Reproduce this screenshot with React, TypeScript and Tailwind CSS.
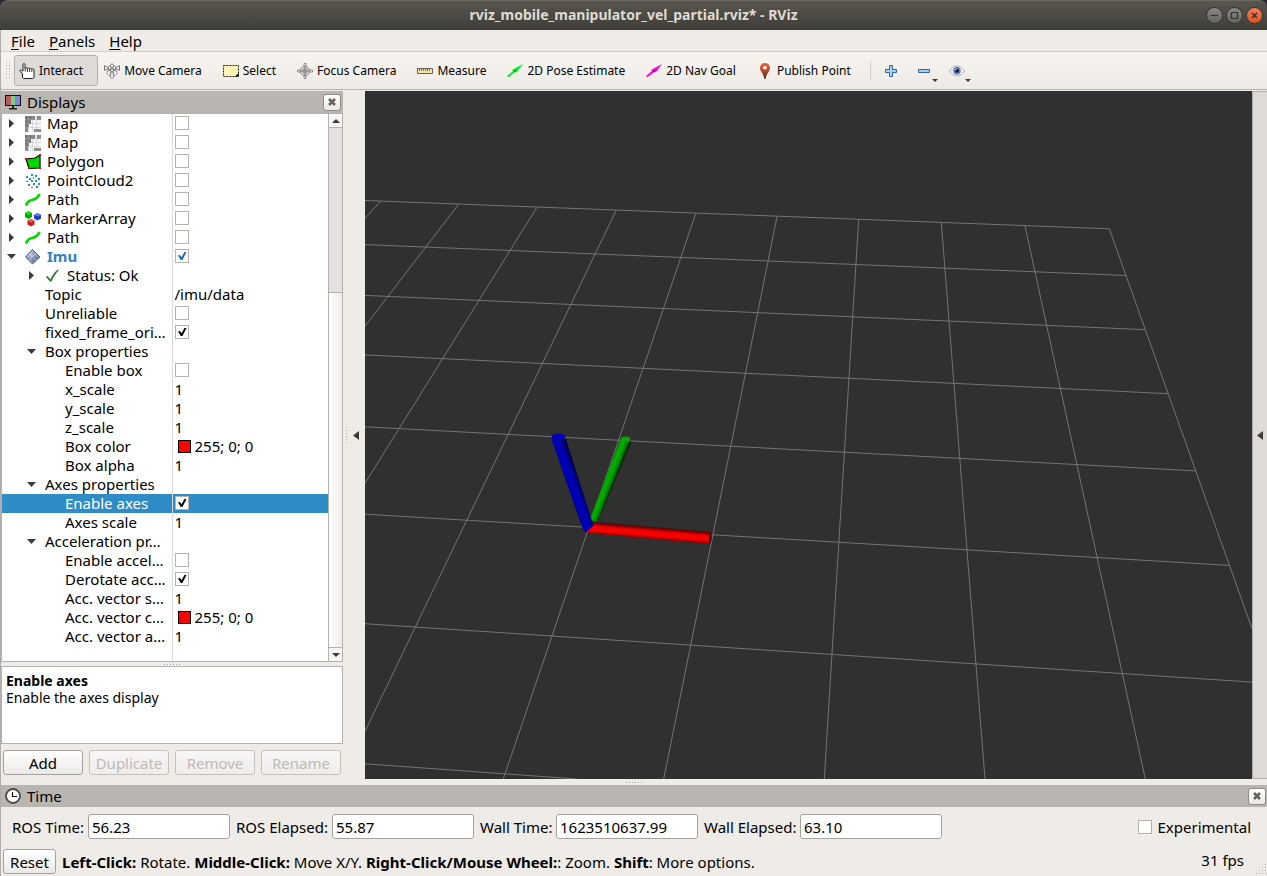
import { useState } from 'react';
import type { ReactNode } from 'react';

interface TreeRow {
  name: string;
  level: number;
  arrow?: 'open' | 'closed';
  icon?: ReactNode;
  checked?: boolean;
  value?: string;
  color?: boolean;
  active?: boolean;
  selected?: boolean;
}

// Display type icons
const MapIcon = () => (
  <svg className="h-4 w-4 shrink-0" viewBox="0 0 16 16" shapeRendering="crispEdges">
    <rect width="16" height="16" fill="#f6f6f6" />
    <path d="M3.500 0v16M7.500 0v16M11.500 0v16M0 3.500h16M0 7.500h16M0 11.500h16" stroke="#d8d8d8" />
    <path d="M0 0h10v4H6v4H4v3H0z" fill="#7a7a7a" />
    <path d="M0 11h3v5H0zM12 0h4v4h-4zM9 13h7v3H9z" fill="#8c8c8c" />
    <path d="M3.500 0v10M7.500 0v4M0 3.500h10M0 7.500h5M0 11.500h3" stroke="#a4a4a4" strokeOpacity=".6" />
  </svg>
);

const PolygonIcon = () => (
  <svg className="h-4 w-4 shrink-0" viewBox="0 0 16 16">
    <path d="M1 5l9-1 5-3v13l-11 .500z" fill="#00d800" stroke="#000" strokeWidth="1.200" />
    <path d="M0 4h2v2H0zM14 0h2v2h-2zM14 13h2v2h-2zM3 13h2v2H3z" fill="#f00" />
  </svg>
);

const PointCloudIcon = () => (
  <svg className="h-4 w-4 shrink-0" viewBox="0 0 16 16" shapeRendering="crispEdges">
    <path
      d="M1 3h2v2H1zM6 1h2v2H6zM10 2h2v2h-2zM4 5h2v2H4zM8 4h1v2H8zM13 5h2v2h-2zM1 8h2v1H1zM6 7h2v2H6zM10 7h2v2h-2zM3 11h2v2H3zM8 10h2v2H8zM13 10h2v2h-2zM6 14h2v1H6zM11 13h2v2h-2z"
      fill="#1a8cf0"
    />
  </svg>
);

const PathIcon = () => (
  <svg className="h-4 w-4 shrink-0" viewBox="0 0 16 16">
    <path d="M1 13.500c1.500-4 3.500-5 6-5.500S12.500 6.500 14.500 2" fill="none" stroke="#00d800" strokeWidth="2.800" />
  </svg>
);

const MarkerArrayIcon = () => (
  <svg className="h-4 w-4 shrink-0" viewBox="0 0 16 16">
    <path d="M0 2L3.500 .3 7 2v4L3.500 8 0 6z" fill="#00a800" />
    <path d="M0 2L3.500 .3 7 2 3.500 4z" fill="#1be01b" />
    <path d="M9 4l3.500-2L16 4v3.500l-3.500 2-3.500-2z" fill="#1c3ec4" />
    <path d="M9 4l3.500-2L16 4l-3.500 1.500z" fill="#5a78f0" />
    <path d="M2.500 9.500L6 8l3.500 1.500v4L6 15.500l-3.500-2z" fill="#c81e1e" />
    <path d="M2.500 9.500L6 8l3.500 1.500L6 11.500z" fill="#f06060" />
  </svg>
);

const ImuIcon = () => (
  <svg className="h-4 w-4 shrink-0" viewBox="0 0 16 16">
    <path d="M7.500 .5L15 8l-7.500 7L.5 8z" fill="#8d9bc0" stroke="#54638c" />
    <path d="M7.500 1.500v6L1.500 8z" fill="#b4bfda" />
    <path d="M7.500 7.500L14 8l-6.500 6z" fill="#6d7ca6" />
    <path d="M4 11l7-7M4.500 5l6.500 6.500" stroke="#d5dced" strokeWidth=".8" />
  </svg>
);

const StatusOkIcon = () => (
  <svg className="h-4 w-4 shrink-0" viewBox="0 0 16 16">
    <path d="M1 9l1.500-1 3 3.500C7.500 7 9.500 4 13 1.500l.8.5C10.500 5.500 8.500 9 6.500 13.500H5z" fill="#1d7a25" />
  </svg>
);

const rows: TreeRow[] = [
  { name: 'Map', level: 0, arrow: 'closed', icon: <MapIcon />, checked: false },
  { name: 'Map', level: 0, arrow: 'closed', icon: <MapIcon />, checked: false },
  { name: 'Polygon', level: 0, arrow: 'closed', icon: <PolygonIcon />, checked: false },
  { name: 'PointCloud2', level: 0, arrow: 'closed', icon: <PointCloudIcon />, checked: false },
  { name: 'Path', level: 0, arrow: 'closed', icon: <PathIcon />, checked: false },
  { name: 'MarkerArray', level: 0, arrow: 'closed', icon: <MarkerArrayIcon />, checked: false },
  { name: 'Path', level: 0, arrow: 'closed', icon: <PathIcon />, checked: false },
  { name: 'Imu', level: 0, arrow: 'open', icon: <ImuIcon />, checked: true, active: true },
  { name: 'Status: Ok', level: 1, arrow: 'closed', icon: <StatusOkIcon /> },
  { name: 'Topic', level: 1, value: '/imu/data' },
  { name: 'Unreliable', level: 1, checked: false },
  { name: 'fixed_frame_ori…', level: 1, checked: true },
  { name: 'Box properties', level: 1, arrow: 'open' },
  { name: 'Enable box', level: 2, checked: false },
  { name: 'x_scale', level: 2, value: '1' },
  { name: 'y_scale', level: 2, value: '1' },
  { name: 'z_scale', level: 2, value: '1' },
  { name: 'Box color', level: 2, value: '255; 0; 0', color: true },
  { name: 'Box alpha', level: 2, value: '1' },
  { name: 'Axes properties', level: 1, arrow: 'open' },
  { name: 'Enable axes', level: 2, checked: true, selected: true },
  { name: 'Axes scale', level: 2, value: '1' },
  { name: 'Acceleration pr…', level: 1, arrow: 'open' },
  { name: 'Enable accel…', level: 2, checked: false },
  { name: 'Derotate acc…', level: 2, checked: true },
  { name: 'Acc. vector s…', level: 2, value: '1' },
  { name: 'Acc. vector c…', level: 2, value: '255; 0; 0', color: true },
  { name: 'Acc. vector a…', level: 2, value: '1' },
];

const indents = ['pl-0', 'pl-5', 'pl-10'];

const Checkbox = ({ id, label, initial = false, blue = false }: { id?: string; label?: string; initial?: boolean; blue?: boolean }) => {
  const [on, setOn] = useState(initial);
  return (
    <span className="relative block h-[14px] w-[14px] shrink-0">
      <input
        id={id}
        type="checkbox"
        aria-label={label}
        checked={on}
        onChange={() => setOn(!on)}
        className="block h-[14px] w-[14px] appearance-none border border-[#b6b2ae] bg-white"
      />
      {on && (
        <svg className="pointer-events-none absolute inset-0 h-[14px] w-[14px]" viewBox="0 0 14 14">
          <path d="M3 6.500l2-.4 1.500 2.200L9.500 3h2L7.400 11H5.800z" fill={blue ? '#1f64ad' : '#000'} />
        </svg>
      )}
    </span>
  );
};

const CloseButton = ({ label }: { label: string }) => (
  <button
    aria-label={label}
    className="flex h-[17px] w-[18px] items-center justify-center rounded-[3px] border border-[#8f8b87] bg-gradient-to-b from-white to-[#ebe9e7]"
  >
    <svg className="h-2 w-2" viewBox="0 0 8 8">
      <path d="M1 1l6 6M7 1L1 7" stroke="#66635f" strokeWidth="2.600" />
    </svg>
  </button>
);

const Arrow = ({ dir }: { dir: 'open' | 'closed' }) => (
  <svg className="h-[9px] w-[9px]" viewBox="0 0 9 9">
    <path d={dir === 'open' ? 'M0 2h9L4.500 7z' : 'M2 0v9l5-4.500z'} fill="#3c3b37" />
  </svg>
);

// Toolbar icons
const HandIcon = () => (
  <svg className="h-4 w-4 shrink-0" viewBox="0 0 16 16">
    <path
      d="M3.500 10.500L1 8.500c-.8-1 .3-2 1.300-1.300l1.700 1V1.500c0-1.200 2-1.200 2 0v4c0-1 2.200-1 2.200.2 0-1 2.300-1 2.300.2 0-.9 2.200-.8 2.200.4.2-.7 2.300-.6 2.300.6V14c0 1-.5 1.500-1.500 1.500H5c-1 0-1.500-.6-1.500-1.500z"
      fill="#fff"
      stroke="#222"
    />
    <path d="M6.200 5.500v3M8.400 6v3M10.600 6v3M12.800 6.500V9" stroke="#222" strokeWidth=".9" />
  </svg>
);

const MoveIcon = () => (
  <svg className="h-4 w-4 shrink-0" viewBox="0 0 16 16" fill="#f4f2ef" stroke="#6b6b6b" strokeWidth=".9">
    <path d="M2.500 5.500C4 8.500 12 8.500 13.500 5.500M3 9c1.500-4 8.500-4 10 0" fill="none" />
    <path d="M8 .5l2.500 2.700H9V6H7V3.200H5.500zM8 15.500l3-3.200H9.300V9H6.700v3.300H5z" />
    <path d="M.5 7.500v-5l1.300 1.200L4.500 4v2l-2 .2zM15.500 7.500v-5l-1.300 1.200-2.700.3v2l2 .2z" />
    <circle cx="8" cy="7.200" r="1.600" />
    <path d="M3 9.500l.3 2M13 9.500l-.3 2" />
  </svg>
);

const SelectIcon = () => (
  <svg className="h-4 w-4 shrink-0" viewBox="0 0 16 16">
    <path d="M.5 2.500h15v11H.5z" fill="#fff4b4" stroke="#222" strokeDasharray="2 1" />
    <path d="M15.500 10v3.500H12z" fill="#000" />
  </svg>
);

const FocusIcon = () => (
  <svg className="h-4 w-4 shrink-0" viewBox="0 0 16 16" fill="none" stroke="#777">
    <circle cx="8" cy="8" r="4.600" fill="#e8e6e3" />
    <circle cx="8" cy="8" r="2.300" />
    <path d="M8 3v10M3 8h10" />
    <path d="M7 .5h2v2.800H7zM7 12.700h2v2.800H7zM.5 7h2.800v2H.5zM12.700 7h2.800v2h-2.800z" fill="#f4f2ef" strokeWidth=".8" />
  </svg>
);

const RulerIcon = () => (
  <svg className="h-4 w-4 shrink-0" viewBox="0 0 16 16">
    <path d="M.5 5.500h15v5H.5z" fill="#f2e4a8" stroke="#65625c" />
    <path d="M2.500 6v2M4.500 6v2M6.500 6v2M8.500 6v2M10.500 6v2M12.500 6v2" stroke="#77736a" />
  </svg>
);

const PoseArrow = ({ fill, dark }: { fill: string; dark: string }) => (
  <svg className="h-4 w-4 shrink-0" viewBox="0 0 16 16">
    <path d="M0 13l6-5-1-1L16 1 9.500 9.500 8.300 9 1.200 14.300z" fill={fill} />
    <path d="M6.500 8l2.500-1.300-.8 2.300z" fill={dark} />
  </svg>
);

const PinIcon = () => (
  <svg className="h-4 w-4 shrink-0" viewBox="0 0 16 16">
    <defs>
      <linearGradient id="pin" x1="0" y1="0" x2="0" y2="1">
        <stop offset="0" stopColor="#f0603c" />
        <stop offset=".5" stopColor="#b04a2c" />
        <stop offset="1" stopColor="#403020" />
      </linearGradient>
    </defs>
    <path d="M8 0C5 0 3 2.200 3 5c0 3.500 4 6 4.300 11h1.400C9 11 13 8.500 13 5c0-2.800-2-5-5-5z" fill="url(#pin)" />
    <circle cx="8" cy="4.700" r="1.800" fill="#fff" />
  </svg>
);

const PlusIcon = () => (
  <svg className="h-3 w-3" viewBox="0 0 12 12">
    <path d="M4.500 .5h3v4h4v3h-4v4h-3v-4h-4v-3h4z" fill="#a9cdee" stroke="#2f66aa" />
  </svg>
);

const MinusIcon = () => (
  <svg className="h-3 w-3" viewBox="0 0 12 12">
    <path d="M.5 4.500h11v3H.5z" fill="#a9cdee" stroke="#2f66aa" />
  </svg>
);

const EyeIcon = () => (
  <svg className="h-4 w-4" viewBox="0 0 16 16">
    <path d="M.5 8C3 4 5.500 3.200 8 3.200S13 4 15.500 8C13 12 10.500 12.800 8 12.800S3 12 .5 8z" fill="#ededed" stroke="#b2afab" />
    <circle cx="8" cy="7.800" r="3.700" fill="#5c74b8" />
    <circle cx="8" cy="7.800" r="1.700" fill="#0c1230" />
    <circle cx="6.800" cy="6.500" r=".8" fill="#d8e0f4" />
  </svg>
);

const tools = [
  { label: 'Interact', icon: <HandIcon />, active: true },
  { label: 'Move Camera', icon: <MoveIcon /> },
  { label: 'Select', icon: <SelectIcon /> },
  { label: 'Focus Camera', icon: <FocusIcon /> },
  { label: 'Measure', icon: <RulerIcon /> },
  { label: '2D Pose Estimate', icon: <PoseArrow fill="#00f028" dark="#0a7a1e" /> },
  { label: '2D Nav Goal', icon: <PoseArrow fill="#fa00e0" dark="#8a0a7c" /> },
  { label: 'Publish Point', icon: <PinIcon /> },
];

const menus = ['File', 'Panels', 'Help'];

// Ground grid, as [x1, y1, x2, y2]
const gridLines = [
  [0, 109.5, 744.3, 137.8],
  [0, 153.6, 761, 184.5],
  [0, 204.4, 780.3, 238.7],
  [0, 263.9, 803.3, 302.7],
  [0, 335.8, 830.7, 379.9],
  [0, 423.2, 864.7, 474.4],
  [0, 532.7, 887, 591.1],
  [0, 672.8, 211.7, 688],
  [15.7, 110.3, 0, 127.2],
  [93.3, 113.7, 0, 235.3],
  [171.7, 116.7, 0, 392.3],
  [251, 119.7, 0, 640.4],
  [330.7, 122.7, 138.3, 688],
  [412, 125.7, 298.7, 688],
  [493.7, 128.4, 459.3, 688],
  [576.3, 131.8, 620, 688],
  [660, 134.8, 780.3, 688],
  [744.3, 137.8, 887, 537.6],
];

const Viewport = () => (
  <svg className="min-w-0 flex-1 bg-[#303030]" viewBox="0 0 887 688" preserveAspectRatio="xMinYMin slice" role="img" aria-label="3D view">
    <defs>
      <linearGradient id="blue" gradientUnits="userSpaceOnUse" x1="202" y1="395" x2="216" y2="390">
        <stop offset="0" stopColor="#000090" />
        <stop offset=".3" stopColor="#0000c0" />
        <stop offset=".65" stopColor="#0000a0" />
        <stop offset="1" stopColor="#000020" />
      </linearGradient>
      <linearGradient id="green" gradientUnits="userSpaceOnUse" x1="239" y1="388" x2="249" y2="392">
        <stop offset="0" stopColor="#009000" />
        <stop offset=".35" stopColor="#00b400" />
        <stop offset=".7" stopColor="#008c00" />
        <stop offset="1" stopColor="#001e00" />
      </linearGradient>
      <linearGradient id="red" gradientUnits="userSpaceOnUse" x1="287" y1="436" x2="286" y2="448">
        <stop offset="0" stopColor="#500000" />
        <stop offset=".35" stopColor="#f00000" />
        <stop offset=".65" stopColor="#ff0000" />
        <stop offset="1" stopColor="#900000" />
      </linearGradient>
    </defs>
    <g stroke="#747474">
      {gridLines.map(([x1, y1, x2, y2], i) => (
        <line key={i} x1={x1} y1={y1} x2={x2} y2={y2} />
      ))}
    </g>
    <path d="M225 428L255 349c1-4 12-2 11 3l-33.500 80z" fill="url(#green)" />
    <ellipse cx="260.500" cy="348.500" rx="4.800" ry="3" fill="#00a800" />
    <path d="M228 431l118 10c1.500 3 1 9-.7 12L222 442z" fill="url(#red)" />
    <path d="M345.500 441.500c1.500 2 1.500 9-.7 11.500-1.500-3-1-9 .7-11.500z" fill="#3a0000" />
    <path d="M186.300 347.500l31.200 90 3.500 4 7.500-7-27.800-87z" fill="url(#blue)" />
    <ellipse cx="193.500" cy="346" rx="7" ry="3.600" fill="#0000b8" />
  </svg>
);

const fields = [
  { id: 'ros-time', label: 'ROS Time:', value: '56.23', width: 'w-[76px]' },
  { id: 'ros-elapsed', label: 'ROS Elapsed:', value: '55.87', width: 'w-[96px]' },
  { id: 'wall-time', label: 'Wall Time:', value: '1623510637.99', width: 'w-[76px]' },
  { id: 'wall-elapsed', label: 'Wall Elapsed:', value: '63.10', width: 'w-[96px]' },
];

const buttonStyle = 'h-[25px] rounded-[3px] border border-[#a5a19d] bg-gradient-to-b from-white to-[#eceae8]';

export default function App() {
  return (
    <div className="flex h-screen flex-col overflow-hidden bg-[#2a2730] font-['Noto_Sans',sans-serif] text-[15px] leading-5 text-black">
      {/* Title bar */}
      <header className="grid h-[30px] shrink-0 grid-cols-[1fr_auto_1fr] items-center rounded-t-lg border-t border-[#6b685f] bg-gradient-to-b from-[#59564e] to-[#3e3d38]">
        <span />
        <h1 className="pb-px text-sm font-bold text-[#dfdbd2]">rviz_mobile_manipulator_vel_partial.rviz* - RViz</h1>
        <div className="flex justify-end gap-[3px] pr-1">
          {['Minimize', 'Maximize', 'Close'].map((name) => (
            <button
              key={name}
              aria-label={name}
              className={
                name === 'Close'
                  ? 'h-[17px] w-[17px] rounded-full border border-[#35342f] bg-gradient-to-b from-[#f47f58] to-[#e2501f]'
                  : 'h-[17px] w-[17px] rounded-full border border-[#35342f] bg-gradient-to-b from-[#8b8983] to-[#65635d]'
              }
            >
              <svg viewBox="0 0 15 15" fill="none" stroke="#33322e" strokeWidth="1.200">
                {name === 'Minimize' && <path d="M4 7.500h7" />}
                {name === 'Maximize' && <path d="M4.500 4.500h6v6h-6z" />}
                {name === 'Close' && <path d="M5 5l5 5M10 5l-5 5" strokeWidth="1.500" />}
              </svg>
            </button>
          ))}
        </div>
      </header>

      <div className="flex min-h-0 flex-1 flex-col border-l border-[#b0adaa] bg-[#efebe7]">
        {/* Menu bar */}
        <nav className="flex h-[22px] shrink-0 items-center gap-[14px] border-b border-[#d3cfcb] pl-[10px]">
          {menus.map((m) => (
            <button key={m}>
              <u className="underline-offset-2">{m[0]}</u>
              {m.slice(1)}
            </button>
          ))}
        </nav>

        {/* Toolbar */}
        <div className="flex h-[38px] shrink-0 items-center border-b border-[#b9b5b1] bg-gradient-to-b from-[#f8f5f1] to-[#eeebe7] text-xs">
          <svg className="mx-1 h-[17px] w-[5px] shrink-0" viewBox="0 0 5 17">
            <path d="M1.500 0v17M4.500 0v17" stroke="#b8b4b0" strokeDasharray="1 2" />
          </svg>
          <div className="flex gap-px">
            {tools.map((t) => (
              <button
                key={t.label}
                className={
                  t.active
                    ? 'flex h-[31px] items-center gap-1 rounded-[3px] border border-[#b4b0ac] bg-[#dedad7] pr-[14px] pl-1 whitespace-nowrap'
                    : 'flex h-[31px] items-center gap-1 border border-transparent pr-[14px] pl-1 whitespace-nowrap'
                }
              >
                {t.icon}
                {t.label}
              </button>
            ))}
          </div>
          <span className="mx-1 h-5 w-px bg-[#d3cfcb]" />
          <button aria-label="Add tool" className="flex h-[31px] w-[33px] items-center justify-center">
            <PlusIcon />
          </button>
          <button aria-label="Remove tool" className="relative flex h-[31px] w-[33px] items-center justify-center">
            <MinusIcon />
            <svg className="absolute right-[3px] bottom-1 h-[3px] w-[6px]" viewBox="0 0 6 3">
              <path d="M0 0h6L3 3z" fill="#3c3b37" />
            </svg>
          </button>
          <button aria-label="Views" className="relative flex h-[31px] w-[33px] items-center justify-center">
            <EyeIcon />
            <svg className="absolute right-[3px] bottom-1 h-[3px] w-[6px]" viewBox="0 0 6 3">
              <path d="M0 0h6L3 3z" fill="#3c3b37" />
            </svg>
          </button>
        </div>

        <main className="flex min-h-0 flex-1 pt-px">
          {/* Displays panel */}
          <aside className="flex w-[342px] shrink-0 flex-col">
            <div className="flex h-[22px] shrink-0 items-center bg-[#b9b5b1] pr-[2px] pl-1">
              <svg className="h-4 w-4" viewBox="0 0 16 16">
                <path d="M0 1h16v11H0z" fill="#111" />
                <path d="M1 2h5v9H1z" fill="#b85c60" />
                <path d="M6 2h4v9H6z" fill="#78d080" />
                <path d="M10 2h5v9h-5z" fill="#8088d8" />
                <path d="M7 12h2v2h3v1.500H4V14h3z" fill="#222" />
              </svg>
              <h2 className="flex-1 pl-[6px]">Displays</h2>
              <CloseButton label="Close Displays" />
            </div>
            <div className="flex min-h-0 flex-1 border border-[#b5b1ad] bg-white">
              <div className="min-w-0 flex-1 overflow-hidden">
                <table className="w-full table-fixed border-collapse">
                  <colgroup>
                    <col className="w-[170px]" />
                    <col />
                  </colgroup>
                  <tbody>
                    {rows.map((r, i) => (
                      <tr key={i} className={r.selected ? 'h-[19px] bg-[#308cc6] text-white' : 'h-[19px]'}>
                        <td className="border-r border-[#dcdad8] p-0">
                          <div className={`flex h-[19px] items-center leading-[19px] whitespace-nowrap ${indents[r.level]}`}>
                            <span className="mr-1 flex w-[19px] shrink-0 justify-center">{r.arrow && <Arrow dir={r.arrow} />}</span>
                            {r.icon}
                            <span className={`${r.icon ? 'pl-[6px]' : ''} ${r.active ? 'font-bold text-[#3080c8]' : ''}`}>{r.name}</span>
                          </div>
                        </td>
                        <td className="p-0 pl-[2px]">
                          <div className="flex h-[19px] items-center pb-px leading-[19px]">
                            {r.checked !== undefined && <Checkbox label={r.name} initial={r.checked} blue={r.active} />}
                            {r.color && <span className="mr-1 ml-[3px] h-[13px] w-[13px] border border-black bg-[#f00]" />}
                            {r.value}
                          </div>
                        </td>
                      </tr>
                    ))}
                  </tbody>
                </table>
                <div className="h-full w-[171px] border-r border-[#dcdad8]" />
              </div>
              {/* Scroll bar */}
              <div className="flex w-[14px] shrink-0 flex-col border-l border-[#b5b1ad] bg-[#e4e2e0]">
                <button aria-label="Scroll up" className="flex h-[14px] items-center justify-center border-b border-[#b5b1ad] bg-[#f8f7f6]">
                  <svg className="h-1 w-2" viewBox="0 0 8 4">
                    <path d="M0 4h8L4 0z" fill="#3c3b37" />
                  </svg>
                </button>
                <div className="flex-[165]" />
                <div className="flex-[355] border-t border-[#b5b1ad] bg-gradient-to-r from-white to-[#efedeb]" />
                <button aria-label="Scroll down" className="flex h-[14px] items-center justify-center border-t border-[#b5b1ad] bg-[#f8f7f6]">
                  <svg className="h-1 w-2" viewBox="0 0 8 4">
                    <path d="M0 0h8L4 4z" fill="#3c3b37" />
                  </svg>
                </button>
              </div>
            </div>
            <div className="flex h-1 shrink-0 items-center justify-center">
              <svg className="h-px w-[17px]" viewBox="0 0 17 1">
                <path d="M0 .5h17" stroke="#aaa6a2" strokeDasharray="1 2" />
              </svg>
            </div>
            <div className="h-[78px] shrink-0 border border-[#b5b1ad] bg-white px-1 py-[5px] text-sm leading-[17px]">
              <p className="font-bold">Enable axes</p>
              <p>Enable the axes display</p>
            </div>
            <div className="grid shrink-0 grid-cols-4 gap-[6px] px-[2px] pt-[6px] pb-1">
              <button className={buttonStyle}>Add</button>
              {['Duplicate', 'Remove', 'Rename'].map((b) => (
                <button
                  key={b}
                  disabled
                  className="h-[25px] rounded-[3px] border border-[#c4c0bc] bg-gradient-to-b from-[#f8f7f5] to-[#efecea] text-[#bebab6]"
                >
                  {b}
                </button>
              ))}
            </div>
          </aside>

          {/* Left splitter */}
          <div className="flex w-[22px] shrink-0 items-center gap-[6px] pl-[3px]">
            <svg className="h-[17px] w-px" viewBox="0 0 1 17">
              <path d="M.5 0v17" stroke="#aaa6a2" strokeDasharray="1 2" />
            </svg>
            <button aria-label="Hide left panels">
              <svg className="h-[9px] w-[6px]" viewBox="0 0 6 9">
                <path d="M6 0v9L0 4.500z" fill="#3c3b37" />
              </svg>
            </button>
          </div>

          <Viewport />

          <button
            aria-label="Show right panels"
            className="flex w-[15px] shrink-0 items-center justify-center rounded-l-[3px] border-y border-l border-[#b4b0ac] bg-[#dedad7]"
          >
            <svg className="h-[9px] w-[6px]" viewBox="0 0 6 9">
              <path d="M6 0v9L0 4.500z" fill="#3c3b37" />
            </svg>
          </button>
        </main>

        <div className="flex h-[6px] shrink-0 items-center justify-center">
          <svg className="h-px w-[17px]" viewBox="0 0 17 1">
            <path d="M0 .5h17" stroke="#aaa6a2" strokeDasharray="1 2" />
          </svg>
        </div>

        {/* Time panel */}
        <section className="shrink-0">
          <div className="flex h-[22px] items-center bg-[#b9b5b1] pr-px pl-1">
            <svg className="h-4 w-4" viewBox="0 0 16 16">
              <circle cx="8" cy="8" r="7" fill="#fff" stroke="#4c4a46" strokeWidth="1.800" />
              <path d="M7.500 4v4.500H12" fill="none" stroke="#111" strokeWidth="1.200" />
            </svg>
            <h2 className="flex-1 pl-[6px]">Time</h2>
            <CloseButton label="Close Time" />
          </div>
          <div className="flex items-center gap-[6px] pt-[7px] pr-4 pl-[11px]">
            {fields.map((f) => (
              <div key={f.id} className="flex items-center">
                <label htmlFor={f.id} className={`${f.width} whitespace-nowrap`}>
                  {f.label}
                </label>
                <input
                  id={f.id}
                  readOnly
                  value={f.value}
                  className="h-[25px] w-[142px] rounded-[3px] border border-[#a5a19d] bg-white px-[3px] outline-none"
                />
              </div>
            ))}
            <div className="ml-auto flex items-center gap-[6px]">
              <Checkbox id="experimental" />
              <label htmlFor="experimental">Experimental</label>
            </div>
          </div>
        </section>

        {/* Status bar */}
        <footer className="flex shrink-0 items-center pt-[10px] pb-[2px] pl-[2px]">
          <button className={`${buttonStyle} w-[53px]`}>Reset</button>
          <p className="flex-1 pl-[6px] whitespace-nowrap">
            <b>Left-Click:</b> Rotate. <b>Middle-Click:</b> Move X/Y. <b>Right-Click/Mouse Wheel:</b>: Zoom. <b>Shift</b>: More options.
          </p>
          <span className="pr-3 pb-1">31 fps</span>
          <svg className="h-[11px] w-[11px] self-end" viewBox="0 0 11 11">
            <path d="M0 10.500h11M3 7.500h8M6 4.500h5M9 1.500h2" stroke="#b0aca8" strokeDasharray="1 2" />
          </svg>
        </footer>
      </div>
    </div>
  );
}
